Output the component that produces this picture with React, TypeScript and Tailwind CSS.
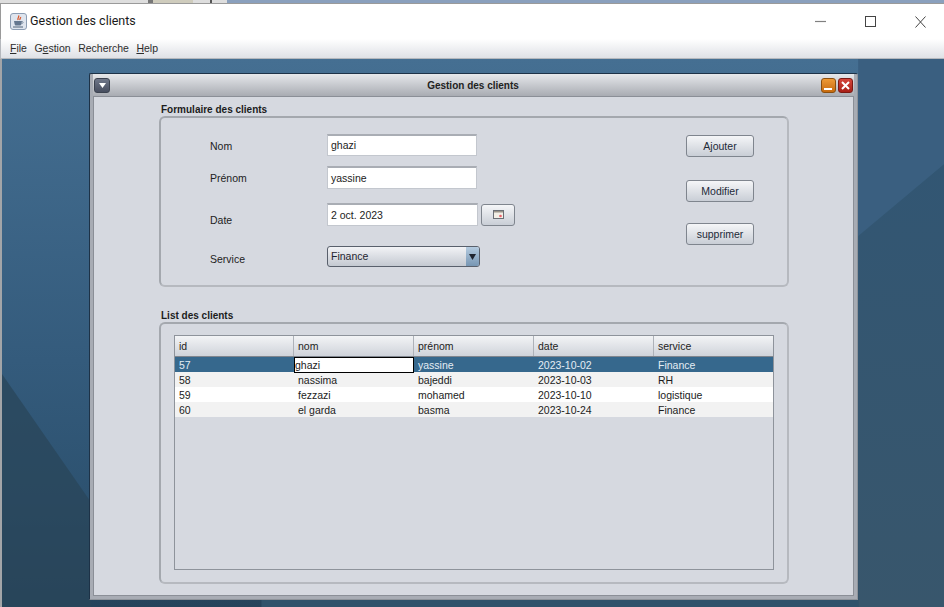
import type { ReactNode } from "react";

const rows = [
  { id: "57", nom: "ghazi", prenom: "yassine", date: "2023-10-02", service: "Finance" },
  { id: "58", nom: "nassima", prenom: "bajeddi", date: "2023-10-03", service: "RH" },
  { id: "59", nom: "fezzazi", prenom: "mohamed", date: "2023-10-10", service: "logistique" },
  { id: "60", nom: "el garda", prenom: "basma", date: "2023-10-24", service: "Finance" },
];

const columns = ["id", "nom", "prénom", "date", "service"];

function Wallpaper() {
  return (
    <svg className="absolute inset-0 h-full w-full" viewBox="0 0 944 548" preserveAspectRatio="none">
      <defs>
        <linearGradient id="wall" x1="0" y1="0" x2="0" y2="1">
          <stop offset="0" stopColor="#456f92" />
          <stop offset="0.55" stopColor="#345b7c" />
          <stop offset="0.8" stopColor="#2d5270" />
          <stop offset="1" stopColor="#26435b" />
        </linearGradient>
        <linearGradient id="wallRight" x1="0" y1="0" x2="0" y2="1">
          <stop offset="0" stopColor="#325673" />
          <stop offset="1" stopColor="#38566c" />
        </linearGradient>
      </defs>
      <rect width="944" height="548" fill="url(#wall)" />
      <polygon points="0,315 89,443 89,548 0,548" fill="#2a4659" opacity="0.75" />
      <polygon points="858,0 944,0 944,105 858,177" fill="#3a5f80" />
      <polygon points="858,177 944,105 944,548 858,548" fill="url(#wallRight)" />
      <polygon points="260,541 858,541 858,548 260,548" fill="#30526b" />
    </svg>
  );
}

function JavaIcon() {
  return (
    <svg width="17" height="17" viewBox="0 0 17 17">
      <rect x="0.5" y="0.5" width="16" height="16" rx="2.5" fill="#dfe5ee" stroke="#8c9db3" />
      <path d="M8.5 2.500c1.200 1.600-1.500 2.400-.4 4.500M10.500 4c.5 1.200-1.200 1.600-.5 3" stroke="#d9572b" strokeWidth="1.300" fill="none" />
      <path d="M4 8h8l-.6 3c-.3 1.200-1 1.500-1.700 1.500h-3.500c-.8 0-1.400-.5-1.600-1.500z" fill="#64778f" />
      <path d="M12 8.500c1.500 0 1.500 2-.6 2.200" stroke="#64778f" strokeWidth="0.800" fill="none" />
      <path d="M3 14h10" stroke="#4f6279" strokeWidth="1" />
    </svg>
  );
}

function WindowControls() {
  return (
    <div className="flex items-center">
      <svg width="50" height="12" viewBox="0 0 50 12">
        <path d="M0 5.500h11" stroke="#808080" strokeWidth="1.200" />
      </svg>
      <svg width="50" height="12" viewBox="0 0 50 12">
        <rect x="0.500" y="0.500" width="10" height="10" fill="none" stroke="#444444" />
      </svg>
      <svg width="11" height="12" viewBox="0 0 11 12">
        <path d="M0.500 0.500l10 11M10.500 0.500l-10 11" stroke="#444444" strokeWidth="1" />
      </svg>
    </div>
  );
}

function MenuItem({ first, rest }: { first: string; rest: string }) {
  return (
    <span>
      <span className="underline">{first}</span>
      {rest}
    </span>
  );
}

function FrameButton({ className, children }: { className: string; children: ReactNode }) {
  return (
    <div className={`flex h-[15px] items-center justify-center rounded-[3px] border ${className}`}>
      {children}
    </div>
  );
}

function TextField({ value, className = "" }: { value: string; className?: string }) {
  return (
    <div
      className={`flex items-center border border-t-2 border-[#c3c7ce] border-t-[#a9adb4] bg-white pt-[1px] pl-[3px] text-[10.500px] text-[#222222] ${className}`}
    >
      {value}
    </div>
  );
}

function ActionButton({ label, className = "" }: { label: string; className?: string }) {
  return (
    <button
      className={`flex h-[22px] w-[68px] items-center justify-center rounded-[3px] border border-[#7f858e] bg-gradient-to-b from-[#f5f6f8] to-[#c9ced6] pt-[1px] text-[10.500px] text-[#222a38] ${className}`}
    >
      {label}
    </button>
  );
}

function FormRow({ label, labelClass = "", className = "", children }: { label: string; labelClass?: string; className?: string; children: ReactNode }) {
  return (
    <div className={`flex items-center ${className}`}>
      <span className={`w-[117px] text-[10.500px] leading-[12px] text-[#222222] ${labelClass}`}>{label}</span>
      {children}
    </div>
  );
}

function GroupTitle({ children }: { children: ReactNode }) {
  return <div className="h-[14px] pt-[1px] pl-[2px] text-[10px] leading-[14px] font-bold text-[#1c1c1c]">{children}</div>;
}

export default function App() {
  return (
    <div className="flex h-[607px] w-[944px] flex-col overflow-hidden bg-white font-['Liberation_Sans',Arial,sans-serif]">
      <div className="flex h-[3px] shrink-0">
        <div className="w-[148px] bg-[#dedede]" />
        <div className="w-[5px] bg-[#777777]" />
        <div className="w-[40px] bg-[#cfccbd]" />
        <div className="w-[17px] bg-[#dedede]" />
        <div className="w-[2px] bg-[#555555]" />
        <div className="w-[15px] bg-[#dedede]" />
        <div className="flex-1 bg-[#8aa0bd]" />
      </div>

      <div className="flex h-[36px] shrink-0 items-center border-t border-l border-[#9a9a9a] bg-white pr-[18px] pl-[9px]">
        <JavaIcon />
        <span className="ml-[3px] flex-1 font-['Roboto',sans-serif] text-[12.500px] text-[#1a1a1a]">Gestion des clients</span>
        <WindowControls />
      </div>

      <div className="flex h-[20px] shrink-0 items-center gap-[7.500px] border-b border-l border-[#b5b8bd] bg-gradient-to-b from-white to-[#dfe1e6] pl-[9px] text-[10.500px] text-[#2c2c2c]">
        <MenuItem first="F" rest="ile" />
        <span>
          G<span className="underline">e</span>stion
        </span>
        <span>Recherche</span>
        <MenuItem first="H" rest="elp" />
      </div>

      <div className="relative flex-1 border-l-2 border-[#a3a5a8] pt-[14px] pl-[87px]">
        <Wallpaper />
        <div className="relative flex h-[527px] w-[769px] flex-col rounded-t-[2px] border border-[#1d3247] border-r-[#8f949b] border-b-[#8f949b] bg-[#a8acb4] pr-[3px] pb-[3px] pl-[3px]">
          <div className="flex h-[22px] shrink-0 items-center justify-between bg-gradient-to-b from-[#e6e8eb] to-[#a9acb3] pr-[1px] pl-[1px]">
            <FrameButton className="w-[16px] border-[#3c4350] bg-gradient-to-b from-[#6f7789] to-[#474e5f]">
              <svg width="7" height="5" viewBox="0 0 7 5">
                <path d="M0 0h7L3.500 5z" fill="white" />
              </svg>
            </FrameButton>
            <span className="pt-[1px] pl-[15px] text-[10px] font-bold text-[#222222]">Gestion des clients</span>
            <div className="flex gap-[2px]">
              <FrameButton className="w-[15px] items-end border-[#8a4f10] bg-gradient-to-b from-[#ee9a36] to-[#c76a0c]">
                <div className="mb-[2px] h-[2px] w-[8px] bg-white" />
              </FrameButton>
              <FrameButton className="w-[15px] border-[#7a1a14] bg-gradient-to-b from-[#d5453a] to-[#a81f17]">
                <svg width="9" height="9" viewBox="0 0 9 9">
                  <path d="M1 1l7 7M8 1l-7 7" stroke="white" strokeWidth="2" />
                </svg>
              </FrameButton>
            </div>
          </div>

          <div className="flex-1 border border-[#8b8f97] bg-[#d6d9e0] pt-[5px] pl-[65px]">
            <GroupTitle>Formulaire des clients</GroupTitle>
            <div className="flex h-[171px] w-[630px] rounded-[6px] border-2 border-[#a4a8ae] border-r-[#b6b9bf] border-b-[#b6b9bf] pl-[49px]">
              <div className="flex flex-col pt-[16px]">
                <FormRow label="Nom" labelClass="pt-[1px]">
                  <TextField value="ghazi" className="h-[22px] w-[150px]" />
                </FormRow>
                <FormRow label="Prénom" labelClass="pt-[1px]" className="mt-[10px]">
                  <TextField value="yassine" className="h-[23px] w-[150px]" />
                </FormRow>
                <FormRow label="Date" labelClass="self-end" className="mt-[14px]">
                  <TextField value="2 oct. 2023" className="h-[23px] w-[151px]" />
                  <button className="ml-[3px] flex h-[22px] w-[34px] items-center justify-center rounded-[3px] border border-[#7f858e] bg-gradient-to-b from-[#f5f6f8] to-[#c9ced6]">
                    <svg width="11" height="9" viewBox="0 0 11 9">
                      <rect x="0.500" y="0.500" width="10" height="8" fill="#f3efe6" stroke="#6b6f75" />
                      <rect x="1" y="1" width="9" height="1.500" fill="#9a9488" />
                      <circle cx="7.500" cy="6" r="1.300" fill="#e8606a" />
                    </svg>
                  </button>
                </FormRow>
                <FormRow label="Service" labelClass="mb-[2px] self-end" className="mt-[20px]">
                  <div className="flex h-[21px] w-[153px] items-center overflow-hidden rounded-[3px] border border-[#59606c] bg-gradient-to-b from-[#f2f3f6] to-[#c4c9d1] pl-[3px] text-[10.500px] text-[#1f2530]">
                    <span className="flex-1 pt-[1px]">Finance</span>
                    <div className="flex h-full w-[13px] items-center justify-center bg-gradient-to-b from-[#b4cbe0] to-[#7796b3]">
                      <svg width="7" height="7" viewBox="0 0 7 7">
                        <path d="M0 1h7L3.500 7z" fill="#1f2530" />
                      </svg>
                    </div>
                  </div>
                </FormRow>
              </div>
              <div className="ml-[171px] flex flex-col pt-[17px]">
                <ActionButton label="Ajouter" />
                <ActionButton label="Modifier" className="mt-[23px]" />
                <ActionButton label="supprimer" className="mt-[21px]" />
              </div>
            </div>

            <div className="mt-[21px]">
              <GroupTitle>List des clients</GroupTitle>
            </div>
            <div className="h-[262px] w-[630px] rounded-[6px] border-2 border-[#a4a8ae] border-r-[#b6b9bf] border-b-[#b6b9bf] pt-[11px] pl-[13px]">
              <div className="h-[235px] w-[600px] border border-[#8e939b]">
                <div className="grid h-[21px] grid-cols-[119px_120px_120px_120px_119px] border-b border-[#7f858e] bg-gradient-to-b from-[#f3f4f6] to-[#cfd3da]">
                  {columns.map((col) => (
                    <div key={col} className="flex items-center border-r border-[#aeb2b9] pt-[1px] pl-[4px] text-[10.500px] text-[#222222] last:border-r-0">
                      {col}
                    </div>
                  ))}
                </div>
                {rows.map((row, i) => {
                  const selected = i === 0;
                  const rowClass = selected ? "bg-[#36688d] text-[#e4edf4]" : i % 2 === 1 ? "bg-[#f2f2f2] text-[#1c1c1c]" : "bg-white text-[#1c1c1c]";
                  return (
                    <div key={row.id} className={`grid h-[15px] grid-cols-[119px_120px_120px_120px_119px] text-[10.500px] leading-[16px] ${rowClass}`}>
                      <div className="pl-[4px]">{row.id}</div>
                      {selected ? (
                        <div className="border border-black bg-white leading-[14px] text-[#1c1c1c]">{row.nom}</div>
                      ) : (
                        <div className="pl-[4px]">{row.nom}</div>
                      )}
                      <div className="pl-[4px]">{row.prenom}</div>
                      <div className="pl-[4px]">{row.date}</div>
                      <div className="pl-[4px]">{row.service}</div>
                    </div>
                  );
                })}
              </div>
            </div>
          </div>
        </div>
      </div>
    </div>
  );
}
